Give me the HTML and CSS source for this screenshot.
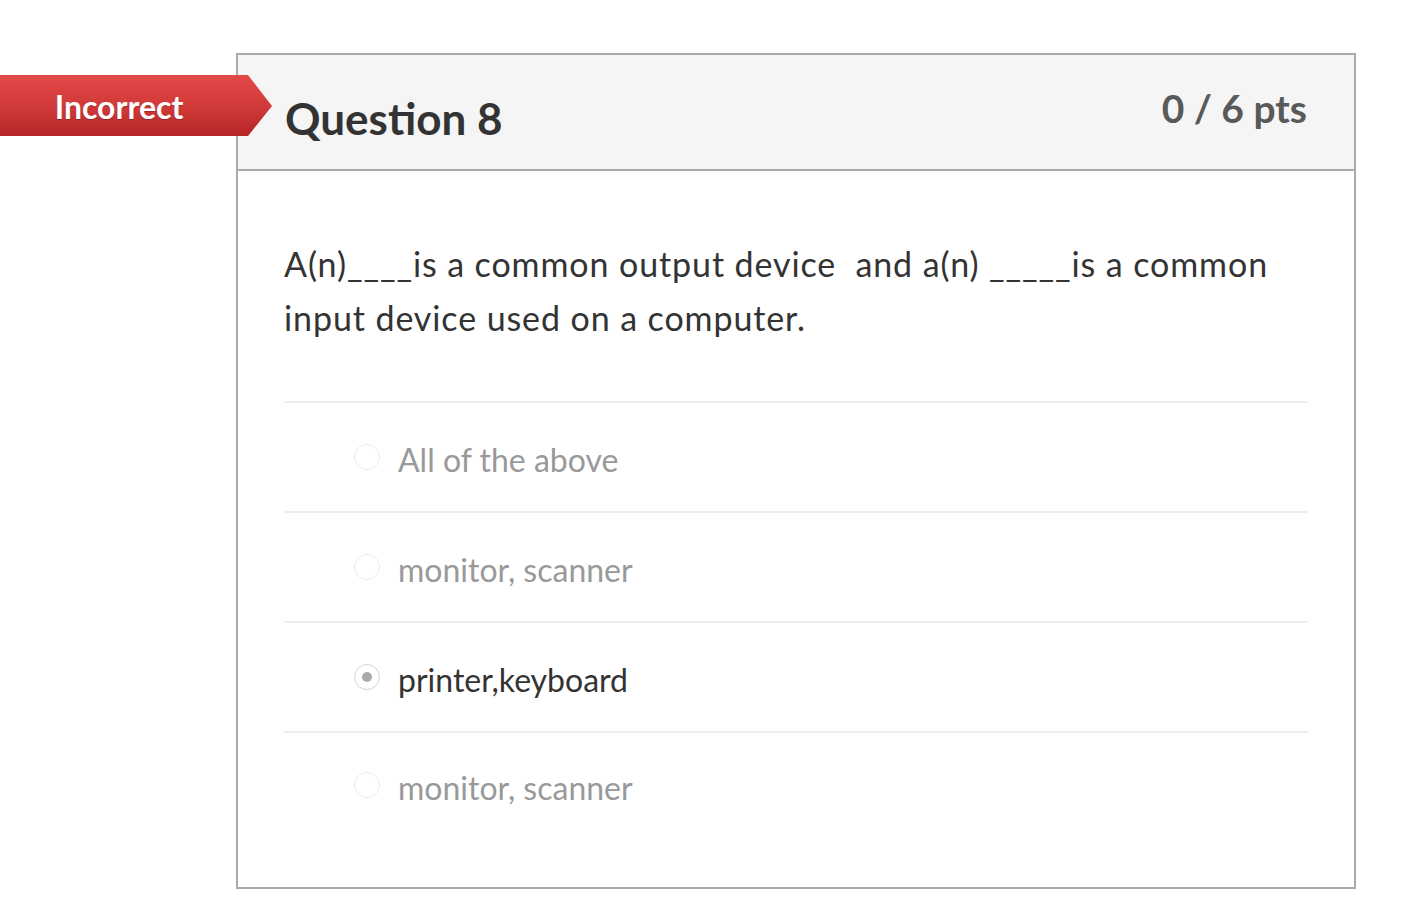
FILE: index.html
```html
<!DOCTYPE html>
<html>
<head>
<meta charset="utf-8">
<link rel="stylesheet" href="styles.css">
</head>
<body>
<div class="page">
  <div class="card">
    <div class="flag"><span>Incorrect</span></div>
    <div class="card-header">
      <h2 class="title">Question 8</h2>
      <div class="pts">0 / 6 pts</div>
    </div>
    <div class="card-body">
      <p class="question">A(n)____is a common output device&nbsp; and a(n) _____is a common input device used on a computer.</p>
      <div class="answers">
        <div class="answer">
          <span class="radio"></span><span class="label">All of the above</span>
        </div>
        <div class="answer">
          <span class="radio"></span><span class="label">monitor, scanner</span>
        </div>
        <div class="answer selected">
          <span class="radio checked"></span><span class="label">printer,keyboard</span>
        </div>
        <div class="answer last">
          <span class="radio"></span><span class="label">monitor, scanner</span>
        </div>
      </div>
    </div>
  </div>
</div>
</body>
</html>
```

FILE: styles.css
```css
html, body {
  margin: 0;
  padding: 0;
  background: #fff;
  font-family: Lato, "Open Sans", sans-serif;
}
.page {
  padding: 53px 0 0 236px;
}
.card {
  position: relative;
  width: 1116px;
  border: 2px solid #aaaaaa;
  background: #fff;
}
.flag {
  position: absolute;
  left: -238px;
  top: 20px;
  width: 272px;
  height: 61px;
  background: linear-gradient(#e24a4a 0%, #d23a3a 50%, #b42626 100%);
  clip-path: polygon(0 0, 248px 0, 272px 31px, 248px 61px, 0 61px);
  display: flex;
  align-items: center;
}
.flag span {
  width: 238px;
  text-align: center;
  color: #fff;
  font-weight: 700;
  font-size: 32px;
  text-shadow: 0 1px 1px rgba(0,0,0,0.25);
  margin-top: 2px;
}
.card-header {
  background: #f5f5f5;
  border-bottom: 2px solid #aaaaaa;
  height: 114px;
  display: flex;
  justify-content: space-between;
  align-items: flex-start;
  padding: 0 47px 0 47px;
}
.title {
  margin: 35px 0 0 0;
  font-size: 44px;
  font-weight: 700;
  color: #333333;
  line-height: 56px;
}
.pts {
  margin-top: 28px;
  font-size: 39px;
  font-weight: 700;
  color: #595959;
  line-height: 50px;
}
.card-body {
  padding: 0 46px 50px 46px;
}
.question {
  margin: 0;
  padding: 66px 0 56px 0;
  font-size: 34px;
  letter-spacing: 0.9px;
  line-height: 54px;
  color: #333333;
}
.answer {
  border-top: 2px solid #eeeeee;
  height: 108px;
  display: flex;
  align-items: center;
  padding-left: 70px;
}
.answer.last {
  height: 104px;
}
.radio {
  width: 26px;
  height: 26px;
  border-radius: 50%;
  border: 1px solid #ececec;
  background: #fff;
  box-sizing: border-box;
  margin-right: 18px;
  margin-top: 0;
  display: flex;
  align-items: center;
  justify-content: center;
}
.radio.checked {
  border-color: #d4d4d4;
}
.radio.checked::after {
  content: "";
  width: 10px;
  height: 10px;
  border-radius: 50%;
  background: #aaaaaa;
}
.label {
  font-size: 32px;
  color: #999999;
  margin-top: 4px;
}
.selected .label {
  color: #333333;
}
```
